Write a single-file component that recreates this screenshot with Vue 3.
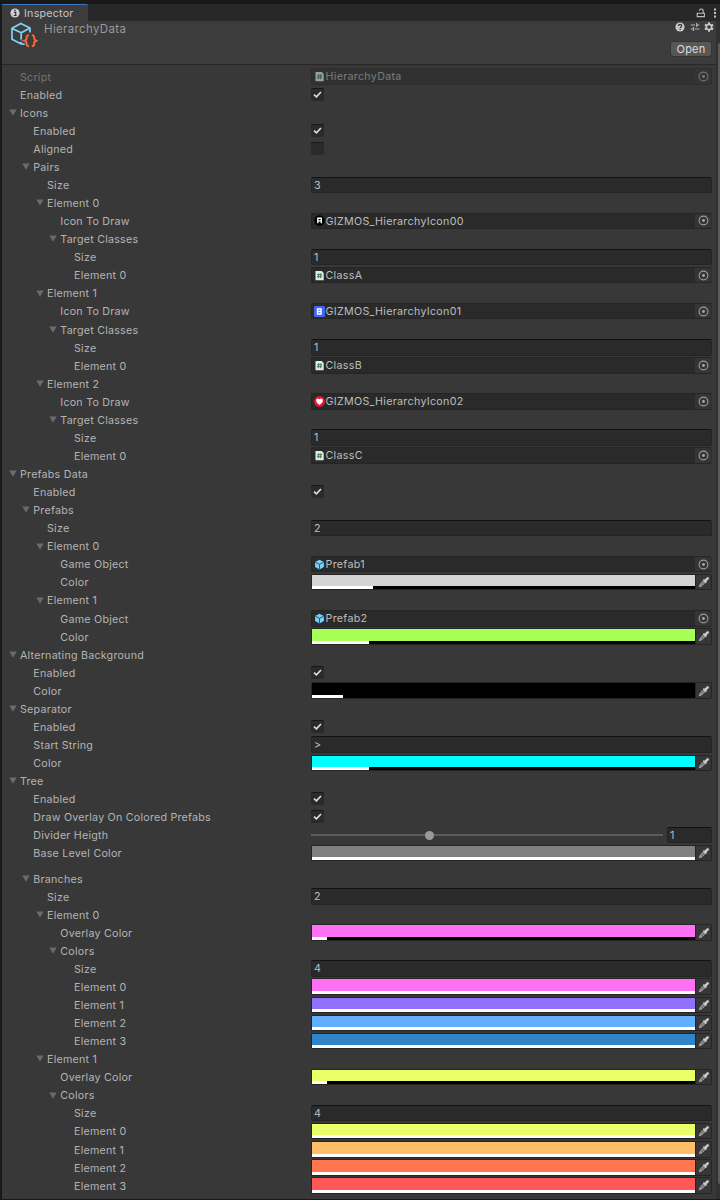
<script setup>
const src = `
0|Script|obj|HierarchyData|script|dim
0|Enabled|check|1
0|Icons|fold
1|Enabled|check|1
1|Aligned|check|
1|Pairs|fold
2|Size|text|3
2|Element 0|fold
3|Icon To Draw|obj|GIZMOS_HierarchyIcon00|a
3|Target Classes|fold
4|Size|text|1
4|Element 0|obj|ClassA|script
2|Element 1|fold
3|Icon To Draw|obj|GIZMOS_HierarchyIcon01|b
3|Target Classes|fold
4|Size|text|1
4|Element 0|obj|ClassB|script
2|Element 2|fold
3|Icon To Draw|obj|GIZMOS_HierarchyIcon02|heart
3|Target Classes|fold
4|Size|text|1
4|Element 0|obj|ClassC|script
0|Prefabs Data|fold
1|Enabled|check|1
1|Prefabs|fold
2|Size|text|2
2|Element 0|fold
3|Game Object|obj|Prefab1|prefab
3|Color|color|#d4d4d4|15.8
2|Element 1|fold
3|Game Object|obj|Prefab2|prefab
3|Color|color|#a6ff57|15
0|Alternating Background|fold
1|Enabled|check|1
1|Color|color|#000000|8.1
0|Separator|fold
1|Enabled|check|1
1|Start String|text|>
1|Color|color|#00ffff|15
0|Tree|fold
1|Enabled|check|1
1|Draw Overlay On Colored Prefabs|check|1
1|Divider Heigth|slider|1
1|Base Level Color|color|#808080|100
1|Branches|fold|||gap
2|Size|text|2
2|Element 0|fold
3|Overlay Color|color|#ff70f4|4
3|Colors|fold
4|Size|text|4
4|Element 0|color|#ff70f4|100
4|Element 1|color|#8f70ff|100
4|Element 2|color|#63aeff|100
4|Element 3|color|#3085c9|100
2|Element 1|fold
3|Overlay Color|color|#ebff69|4
3|Colors|fold
4|Size|text|4
4|Element 0|color|#ebff69|100
4|Element 1|color|#ffbf69|100
4|Element 2|color|#ff764f|100
4|Element 3|color|#ff5757|100`
const rows = src.trim().split('\n').map((line) => {
  const [depth, label, kind, value, extra, flag] = line.split('|')
  return { depth: +depth, label, kind, value, extra, flag }
})
</script>

<template>
  <div class="window">
    <div class="tabs">
      <div class="tab">
        <svg class="info" viewBox="0 0 10 10"><circle cx="5" cy="5" r="4.6" fill="#cfcfcf" /><path d="M4 4.3h1.7v3M3.8 7.5h2.8M4.2 2.4h1.5" stroke="#333" stroke-width="1.2" fill="none" /></svg>
        <span>Inspector</span>
      </div>
      <svg class="lock" viewBox="0 0 10 10"><path d="M1.2 5.2h7.2v3.4H1.2zM7.2 5V3a1.9 1.9 0 0 0-3.8-.3" fill="none" stroke="#bdbdbd" stroke-width="1.1" /></svg>
      <svg class="dots" viewBox="0 0 4 10"><path d="M1 .4h2v2H1zM1 4h2v2H1zM1 7.6h2v2H1z" fill="#c4c4c4" /></svg>
    </div>
    <div class="main">
      <div class="panel">
        <header class="head">
          <svg class="logo" viewBox="0 0 28 28">
            <path d="M15 22.2 11.3 22 2 17.3V6.2L10.8 1.4 20 6v4.4M2 6.4l9.2 4.4L20 6M11.2 10.8V22" fill="none" stroke="#7fd4fb" stroke-width="1.7" stroke-linejoin="round" />
            <path d="M19 13.3c-2.4 0-2.4 1-2.4 2.7 0 1.5-.3 2.3-1.8 2.7 1.5.4 1.8 1.2 1.8 2.7 0 1.7 0 2.7 2.4 2.7M21.800 13.3c2.4 0 2.4 1 2.4 2.7 0 1.5.3 2.3 1.8 2.7-1.5.4-1.8 1.2-1.8 2.7 0 1.7 0 2.7-2.4 2.7" fill="none" stroke="#3c3c3c" stroke-width="4" />
            <path d="M19 13.3c-2.4 0-2.4 1-2.4 2.7 0 1.5-.3 2.3-1.8 2.7 1.5.4 1.8 1.2 1.8 2.7 0 1.7 0 2.7 2.4 2.7M21.800 13.3c2.4 0 2.4 1 2.4 2.7 0 1.5.3 2.3 1.8 2.7-1.5.4-1.8 1.2-1.8 2.7 0 1.7 0 2.7-2.4 2.7" fill="none" stroke="#f8663a" stroke-width="2.1" />
          </svg>
          <span class="title">HierarchyData</span>
          <div class="side">
            <div class="tools">
              <svg viewBox="0 0 10 10"><circle cx="5" cy="5" r="4.6" fill="#c8c8c8" /><path d="M3.5 3.9c0-2 3.2-2 3.2 0C6.7 5 5.1 5 5.1 6.2M5.1 6.9v1.2" fill="none" stroke="#333" stroke-width="1.2" /></svg>
              <svg viewBox="0 0 10 10"><path d="M.8 3h4.2M7 3h2.4M.8 7h2M5 7h4.4M6.7 1v4M3.5 5v4" fill="none" stroke="#b8b8b8" stroke-width="1.2" /></svg>
              <svg viewBox="0 0 10 10"><circle cx="5" cy="5" r="2.7" fill="none" stroke="#c8c8c8" stroke-width="1.7" /><path d="M5 .3v2M5 7.7v2M.9 2.65l1.7 1M7.4 6.35l1.7 1M.9 7.35l1.7-1M7.4 3.65l1.7-1" stroke="#c8c8c8" stroke-width="1.9" /></svg>
            </div>
            <button class="open">Open</button>
          </div>
        </header>

        <div class="rows">
          <div v-for="(r, i) in rows" :key="i" class="row" :class="[r.flag]">
            <div class="label" :class="'d' + r.depth">
              <svg v-if="r.kind === 'fold'" class="arrow" viewBox="0 0 8 7"><path d="M.3.4h7.4L4 6.8z" fill="#6a6a6a" /></svg>
              <span class="caption">{{ r.label }}</span>
            </div>

            <div v-if="r.kind === 'text'" class="field input">{{ r.value }}</div>

            <div v-else-if="r.kind === 'check'" class="box">
              <svg v-if="r.value" viewBox="0 0 13 13"><path d="M3 6.7 5.4 8.9 10 4" fill="none" stroke="#dedede" stroke-width="1.6" /></svg>
            </div>

            <div v-else-if="r.kind === 'obj'" class="field object">
              <svg class="icon" viewBox="0 0 11 11">
                <template v-if="r.extra === 'script'">
                  <path d="M1.5 1h6.2L9.7 3v7.2H1.5z" fill="#e4e9e5" />
                  <path d="M4.7 3.2 4.2 8.2M7 3.2 6.5 8.2M3.2 4.7h4.9M3 6.7h4.9" stroke="#3f8350" stroke-width="1" />
                </template>
                <template v-else-if="r.extra === 'a'">
                  <circle cx="5.5" cy="5.5" r="5.3" fill="#000" />
                  <path d="M3.8 8.3V3.2h3.5v5.1M3.8 5.9h3.5" stroke="#fff" stroke-width="1.4" fill="none" />
                </template>
                <template v-else-if="r.extra === 'b'">
                  <rect width="11" height="11" rx="1.5" fill="#4265f0" />
                  <path d="M3.5 3h3.6v5H3.5zM3.5 5.5h3.6" stroke="#fff" stroke-width="1.3" fill="none" />
                </template>
                <template v-else-if="r.extra === 'heart'">
                  <circle cx="5.5" cy="5.5" r="5.4" fill="#ee1230" />
                  <path d="M5.5 8.9C-.2 5.5 2.5.7 5.5 3.3 8.5.7 11.2 5.5 5.5 8.9z" fill="#fff" />
                </template>
                <template v-else>
                  <path d="M5.5.7 9.9 2.9v5.2L5.5 10.4 1.1 8.1V2.9z" fill="#7bd0fa" />
                  <path d="M1.3 3.2 5.5 5.3 9.7 3.2M5.5 5.3v5" fill="none" stroke="#23566f" stroke-width="1" />
                </template>
              </svg>
              <span class="name">{{ r.value }}</span>
              <span class="pick">
                <svg viewBox="0 0 10 10"><circle cx="5" cy="5" r="4" fill="none" stroke="#9c9c9c" stroke-width="1" /><circle cx="5" cy="5" r="1.3" fill="#a8a8a8" /></svg>
              </span>
            </div>

            <div v-else-if="r.kind === 'color'" class="field color">
              <div class="swatch">
                <div class="tone" :style="{ background: r.value }"></div>
                <div class="alpha"><div class="level" :style="{ width: r.extra + '%' }"></div></div>
              </div>
              <span class="dropper">
                <svg viewBox="0 0 12 12"><path d="M1.3 10.7 2.3 8 6.2 4.2 7.8 5.8 4 9.7z" fill="#777" stroke="#bcbcbc" stroke-width=".8" /><path d="M5.4 3.6 8.4 6.6" stroke="#cfcfcf" stroke-width="1.5" /><path d="M7.2 4.8 9.7 2.3" stroke="#c8c8c8" stroke-width="2.6" stroke-linecap="round" /></svg>
              </span>
            </div>

            <div v-else-if="r.kind === 'slider'" class="slider">
              <div class="track"><div class="knob"></div></div>
              <div class="field input num">{{ r.value }}</div>
            </div>
          </div>
        </div>
      </div>
      <div class="scroll"><div class="thumb"></div></div>
    </div>
  </div>
</template>

<style>
body { background: #191919; }
</style>

<style scoped>
* { box-sizing: border-box; }
.window {
  width: 720px; height: 1200px; padding: 4px 0 1px 2px; overflow: hidden;
  display: flex; flex-direction: column; background: #191919;
  font-family: Inter, "Liberation Sans", sans-serif; font-size: 10.7px; letter-spacing: .23px; color: #b4b4b4;
}
svg { display: block; flex: none; }
.tabs { height: 17px; flex: none; display: flex; align-items: center; background: #282828; }
.tab {
  width: 86px; height: 17px; margin-right: auto; padding-left: 8px; display: flex; align-items: center; gap: 4px;
  background: #3c3c3c; border-top: 1px solid #3a79bb; color: #c6c6c6; border-radius: 0 2px 0 0;
}
.info { width: 10px; height: 10px; }
.lock { width: 10px; height: 10px; margin-right: 7px; }
.dots { width: 4px; height: 10px; margin-right: 3px; }
.main { flex: 1; display: flex; min-height: 0; }
.panel { width: 714px; background: #383838; }
.head { height: 44px; background: #3c3c3c; border-bottom: 1px solid #272727; display: flex; }
.logo { width: 28px; height: 28px; margin: 1px 0 0 8px; }
.title { margin: 1px auto 0 6px; line-height: 15px; font-size: 11.5px; letter-spacing: .35px; color: #999; }
.side { width: 46px; display: flex; flex-direction: column; align-items: flex-end; margin-right: 2px; }
.tools { display: flex; gap: 4.5px; margin-top: 1px; }
.tools svg { width: 10px; height: 10px; }
.open {
  width: 40px; height: 14px; margin: 10px 3px 0 0; padding: 0; border: 0; border-radius: 2px; background: #575757;
  color: #dedede; font: inherit; font-size: 11px; letter-spacing: .2px; line-height: 14px; box-shadow: 0 0 0 .5px #2c2c2c;
}
.rows { padding-top: 2.4px; }
.row { height: 18.07px; display: grid; grid-template-columns: 309px 401px; align-items: center; }
.gap { margin-top: 7.2px; }
.label { display: flex; align-items: center; height: 18px; line-height: 17px; white-space: nowrap; }
.caption { padding-top: 1.4px; }
.d0 { padding-left: 18px; }
.d1 { padding-left: 31.3px; }
.d2 { padding-left: 45px; }
.d3 { padding-left: 58.3px; }
.d4 { padding-left: 72px; }
.arrow { width: 8px; height: 7px; margin: 0 3px 0 -11px; }
.field { height: 16.5px; background: #2a2a2a; border-radius: 2px; line-height: 16px; color: #bebebe; }
.input { border: 1px solid #242424; border-top-color: #121212; padding-left: 2px; line-height: 15.7px; }
.object { display: flex; align-items: center; padding-left: 2px; border: 1px solid #252525; border-right-color: #303030; }
.icon { width: 11px; height: 11px; }
.name { margin-right: auto; padding: 1.2px 0 0 .5px; letter-spacing: .3px; }
.pick { width: 16px; height: 14.5px; background: #353535; display: flex; align-items: center; justify-content: center; border-radius: 0 2px 2px 0; }
.pick svg { width: 11px; height: 11px; }
.dim .label { color: #757575; }
.dim .field { background: #313131; border-color: #2e2e2e; color: #7c7c7c; }
.dim .icon, .dim .pick svg { opacity: .6; }
.box { width: 13px; height: 13px; background: #2a2a2a; border-radius: 2px; box-shadow: inset 0 1px 0 #181818; }
.box svg { width: 13px; height: 13px; }
.color { display: flex; background: #242424; padding: 1px; }
.swatch { width: 383px; display: flex; flex-direction: column; }
.tone { height: 11.5px; }
.alpha { height: 3px; background: #000; }
.level { height: 3px; background: #fff; }
.dropper { flex: 1; margin-left: 1px; background: #373737; display: flex; align-items: center; justify-content: center; }
.dropper svg { width: 12px; height: 12px; }
.slider { display: flex; align-items: center; justify-content: space-between; }
.track { position: relative; width: 352px; height: 2px; background: #5c5c5c; }
.knob { position: absolute; left: 114px; top: -3.5px; width: 9px; height: 9px; border-radius: 50%; background: #999; }
.num { width: 45px; padding-left: 2px; }
.scroll { flex: 1; background: #313131; padding: 22px 0 15px 2px; }
.thumb { height: 100%; background: #5b5b5b; border-radius: 2px 0 0 2px; }
</style>
